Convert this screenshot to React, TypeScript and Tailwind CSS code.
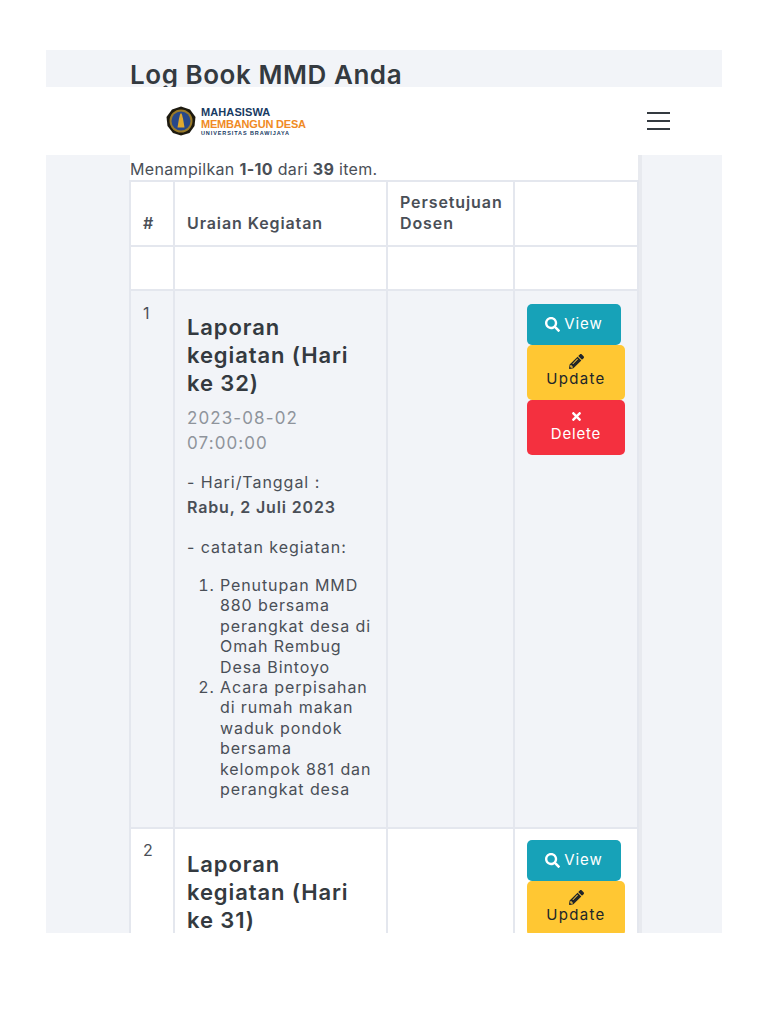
import React from "react";
import { FaPencilAlt, FaSearch, FaTimes } from "react-icons/fa";

const font = { fontFamily: "Inter, 'Noto Sans', sans-serif" };

function Buttons() {
  return (
    <div className="flex flex-col items-start">
      <div className="w-[94px] h-[41px] rounded-[5px] bg-[#17a2b8] text-white flex items-center justify-center gap-[4px] text-[15px] tracking-[0.9px]">
        <FaSearch className="w-[15px] h-[15px]" />
        <span>View</span>
      </div>
      <div className="w-[98px] h-[55px] rounded-[5px] bg-[#ffc733] text-[#212529] text-center pt-[9px] text-[15px] leading-[20px] tracking-[1.3px]">
        <FaPencilAlt className="w-[15px] h-[15px] mx-auto" />
        <span>Update</span>
      </div>
      <div className="w-[98px] h-[55px] rounded-[5px] bg-[#f4303f] text-white text-center pt-[9px] text-[15px] leading-[20px] tracking-[0.8px]">
        <FaTimes className="w-[13px] h-[13px] mx-auto my-[1px]" />
        <span>Delete</span>
      </div>
    </div>
  );
}

const cell = "border-2 border-[#e4e7ee] align-top";
const th = "border-2 border-[#e4e7ee] align-bottom text-left pl-3 pb-[11px] font-semibold leading-[21px] text-[16px] tracking-[0.9px] text-[#4a4f57]";

function Logo() {
  return (
    <div className="flex items-center gap-[5px]">
      <svg width="30" height="30" viewBox="0 0 30 30">
        <path d="M15 .5 24 3.500 29.500 11l-1 9-5 7-8.500 2.500L7 27 1.500 20 .5 11 6 3.500z" fill="#1d1a10" />
        <circle cx="15" cy="15" r="11.500" fill="#9a7a28" />
        <circle cx="15" cy="15" r="9.500" fill="#27488a" />
        <path d="M15 7c1.500 1.500 1.200 3.500 2 5.500l1.500 9h-7l1.500-9c.8-2 .5-4 2-5.500z" fill="#dfa92f" />
      </svg>
      <div className="flex flex-col font-bold" style={{ fontFamily: "'Liberation Sans', sans-serif" }}>
        <span className="text-[11px] leading-[12px] text-[#173a63] tracking-[0.1px]">MAHASISWA</span>
        <span className="text-[11px] leading-[12px] text-[#f08a24] whitespace-nowrap tracking-[-0.2px]">MEMBANGUN DESA</span>
        <span className="text-[5.5px] leading-[7px] text-[#173a63] tracking-[0.9px] whitespace-nowrap">UNIVERSITAS BRAWIJAYA</span>
      </div>
    </div>
  );
}

const h2 = "text-[22px] leading-[28px] font-semibold text-[#343a40] tracking-[0.9px]";

export default function App() {
  return (
    <div className="bg-white h-[1024px] w-[768px] pt-[50px] pl-[46px]" style={font}>
      <div className="relative w-[676px] h-[883px] bg-[#f2f4f8] overflow-hidden text-[#3a3f47]">
        <div className="absolute left-0 top-[37px] w-full h-[68px] bg-white flex items-center justify-between pl-[120px] pr-[52px] z-10">
          <Logo />
          <div className="flex flex-col gap-[6px] w-[23px]">
            <div className="h-[2px] bg-[#343a40]" />
            <div className="h-[2px] bg-[#343a40]" />
            <div className="h-[2px] bg-[#343a40]" />
          </div>
        </div>

        <div className="ml-[84px] w-[512px] h-full">
          <h1 className="text-[26px] leading-[30px] font-semibold text-[#343a40] h-[105px] pt-[10px] tracking-[0.55px]">Log Book MMD Anda</h1>
          <div className="bg-white border-r-4 border-[#e8eaef] h-[778px] w-[512px]">
            <p className="text-[16px] leading-[28px] h-[26px] text-[#4a4f57] tracking-[0.33px]">
              Menampilkan <b className="font-bold">1-10</b> dari <b className="font-bold">39</b> item.
            </p>
            <table className="table-fixed border-collapse w-[508px] text-[16px] -ml-px -mt-px">
              <colgroup>
                <col className="w-[44px]" />
                <col className="w-[213px]" />
                <col className="w-[127px]" />
                <col className="w-[124px]" />
              </colgroup>
              <thead>
                <tr className="h-[65px] bg-white">
                  <th className={th}>#</th>
                  <th className={th}>Uraian Kegiatan</th>
                  <th className={th}>Persetujuan Dosen</th>
                  <th className={cell}></th>
                </tr>
                <tr className="h-[44px] bg-white">
                  <td className={cell}></td>
                  <td className={cell}></td>
                  <td className={cell}></td>
                  <td className={cell}></td>
                </tr>
              </thead>
              <tbody>
                <tr className="h-[538px] bg-[#f2f4f8]">
                  <td className={`${cell} pl-3 pt-[11px] leading-[22px] text-[#4a4f57]`}>1</td>
                  <td className={`${cell} pl-3 pr-3 pt-[22px]`}>
                    <h2 className={h2}>Laporan kegiatan (Hari ke 32)</h2>
                    <p className="mt-[9px] text-[#8f949c] text-[17px] leading-[25px] tracking-[1.1px]">2023-08-02 07:00:00</p>
                    <p className="mt-[14px] text-[#4a4f57] text-[16px] leading-[25px] tracking-[0.96px]">
                      - Hari/Tanggal : <b className="font-semibold block tracking-[0.85px]">Rabu, 2 Juli 2023</b>
                    </p>
                    <p className="mt-[15px] text-[#4a4f57] text-[16px] leading-[25px] tracking-[0.96px]">- catatan kegiatan:</p>
                    <ol className="mt-[15px] list-decimal pl-[33px] text-[#4a4f57] text-[16px] leading-[20.4px] tracking-[0.9px]">
                      <li>Penutupan MMD 880 bersama perangkat desa di Omah Rembug Desa Bintoyo</li>
                      <li>Acara perpisahan di rumah makan waduk pondok bersama kelompok 881 dan perangkat desa</li>
                    </ol>
                  </td>
                  <td className={cell}></td>
                  <td className={`${cell} pl-3 pt-[13px]`}><Buttons /></td>
                </tr>
                <tr className="bg-white">
                  <td className={`${cell} pl-3 pt-[10px] leading-[22px] text-[#4a4f57]`}>2</td>
                  <td className={`${cell} pl-3 pr-3 pt-[21px]`}>
                    <h2 className={h2}>Laporan kegiatan (Hari ke 31)</h2>
                  </td>
                  <td className={cell}></td>
                  <td className={`${cell} pl-3 pt-[11px]`}><Buttons /></td>
                </tr>
              </tbody>
            </table>
          </div>
        </div>
      </div>
    </div>
  );
}
